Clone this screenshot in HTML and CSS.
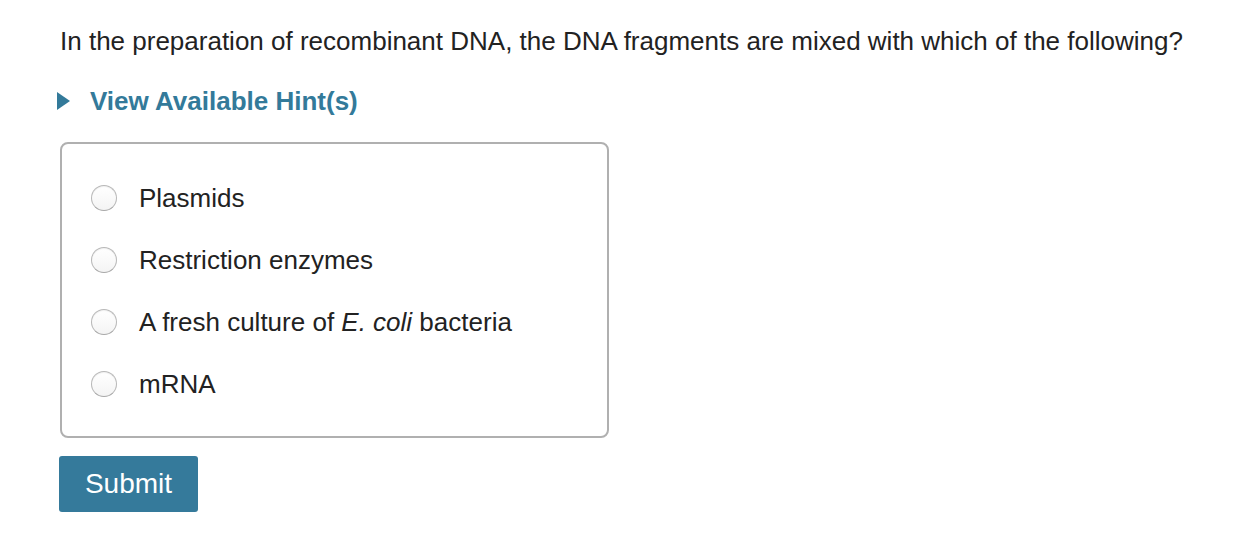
FILE: index.html
```html
<!DOCTYPE html>
<html>
<head>
<meta charset="utf-8">
<link rel="stylesheet" href="styles.css">
</head>
<body>
<div class="page">
  <p class="question">In the preparation of recombinant DNA, the DNA fragments are mixed with which of the following?</p>
  <div class="hint">
    <svg class="tri" width="13" height="18" viewBox="0 0 13 18"><polygon points="0,0 13,9 0,18" fill="#337a9a"/></svg>
    <span>View Available Hint(s)</span>
  </div>
  <div class="box">
    <label class="opt"><span class="radio"></span><span>Plasmids</span></label>
    <label class="opt"><span class="radio"></span><span>Restriction enzymes</span></label>
    <label class="opt"><span class="radio"></span><span>A fresh culture of <i>E. coli</i> bacteria</span></label>
    <label class="opt"><span class="radio"></span><span>mRNA</span></label>
  </div>
  <button class="submit">Submit</button>
</div>
</body>
</html>
```
FILE: styles.css
```css
html, body { margin: 0; padding: 0; background: #fff; }
body { font-family: "Liberation Sans", Arial, sans-serif; color: #222; }
.page { padding: 24px 0 0 60px; }
.question { margin: 0; font-size: 26px; line-height: 34px; color: #222; }
.hint { display: flex; align-items: center; gap: 20px; margin-top: 26px; color: #337a9a; font-weight: bold; font-size: 26px; line-height: 34px; margin-left: -3px; }
.tri { display: block; }
.box { margin-top: 24px; width: 516px; border: 2px solid #b0b0b0; border-radius: 8px; padding: 37px 0 35px 29px; display: flex; flex-direction: column; gap: 28px; }
.opt { display: flex; align-items: center; gap: 22px; font-size: 26px; line-height: 34px; color: #222; }
.radio { width: 26px; height: 26px; border-radius: 50%; border: 1px solid #b8b8b8; border-bottom-color: #a8a8a8; background: linear-gradient(#fff, #f4f4f4); box-shadow: inset 0 1px 1px rgba(0,0,0,0.06); box-sizing: border-box; }
.submit { display: block; margin: 18px 0 0 -1px; width: 139px; height: 56px; border: none; border-radius: 3px; background: #357a9b; color: #fff; font-family: "Liberation Sans", Arial, sans-serif; font-size: 28px; padding: 0; }
```
